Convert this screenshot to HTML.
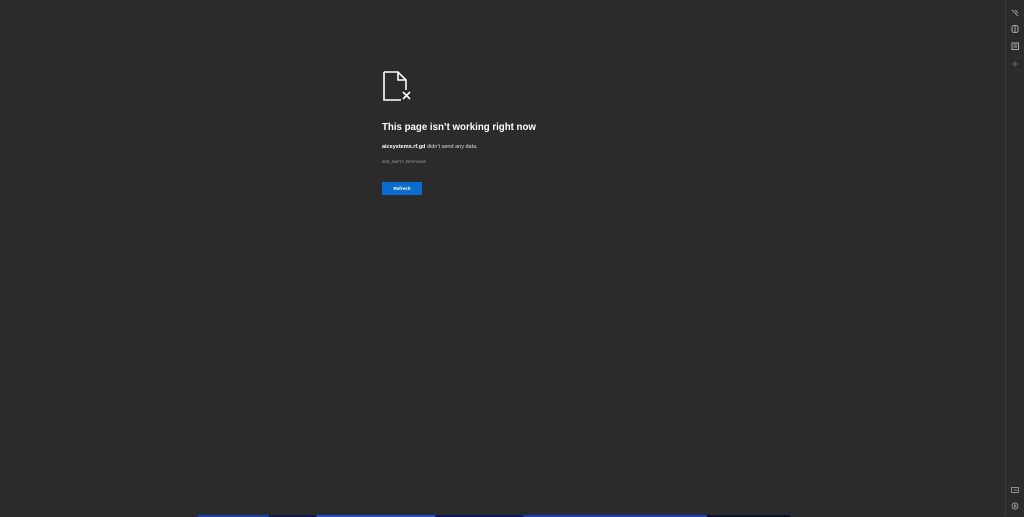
<!DOCTYPE html>
<html><head><meta charset="utf-8"><style>
html,body{margin:0;padding:0;width:1024px;height:517px;overflow:hidden;background:#2b2b2b;font-family:"Segoe UI","Liberation Sans",sans-serif;color:#fff;position:relative}
.side{position:absolute;left:1005px;top:0;width:1px;height:515px;background:#3d3d3d}
.ic{position:absolute;left:1010px;width:10px;height:10px}
h1{position:absolute;left:382px;top:122px;margin:0;font-size:9.7px;line-height:12px;font-weight:bold;white-space:nowrap}
.msg{position:absolute;left:382px;top:144px;font-size:5.5px;line-height:7px;color:#ddd;white-space:nowrap}
.msg b{color:#fff}
.code{position:absolute;left:382px;top:160px;font-size:3.6px;line-height:5px;color:#aaa;white-space:nowrap}
.btn{position:absolute;left:382px;top:182px;width:40px;height:13px;background:#0a6ccf;color:#fff;font-size:4.6px;font-weight:bold;text-align:center;line-height:13px}
.bar{position:absolute;left:198px;top:515px;width:592px;height:2px;background:linear-gradient(90deg,#1840b0 0 12%,#0c1a50 12% 20%,#2050d0 20% 40%,#0a1a60 40% 55%,#1a3fc0 55% 86%,#081230 86% 100%)}
</style></head><body>
<svg style="position:absolute;left:383px;top:71px" width="30" height="31" viewBox="0 0 30 31" fill="none" stroke="#fff" stroke-width="1.6">
<path d="M1 1H15L23 9V19M1 1V29H18"/><path d="M15 1V9H23"/><path d="M20 21L27 28M27 21L20 28"/>
</svg>
<h1>This page isn’t working right now</h1>
<div class="msg"><b>aicsystems.rf.gd</b> didn’t send any data.</div>
<div class="code">ERR_EMPTY_RESPONSE</div>
<div class="btn">Refresh</div>
<div class="side"></div>
<svg class="ic" style="top:8px" viewBox="0 0 10 10" stroke="#999" fill="none" stroke-width="1"><path d="M2 2L8 8M5 2L8 5"/></svg>
<svg class="ic" style="top:24px" viewBox="0 0 10 10" stroke="#aaa" fill="none" stroke-width="1"><rect x="2" y="1.5" width="6" height="7" rx="2"/><path d="M5 1.5V8.5"/></svg>
<svg class="ic" style="top:41px" viewBox="0 0 10 10" stroke="#aaa" fill="none" stroke-width="1"><rect x="2" y="2" width="6.5" height="6.5"/><path d="M3.5 4H7M3.5 6H7"/></svg>
<svg class="ic" style="top:59px" viewBox="0 0 10 10" stroke="#777" fill="none" stroke-width="0.8"><path d="M5 2V8M2 5H8"/></svg>
<svg class="ic" style="top:485px" viewBox="0 0 10 10" stroke="#999" fill="none" stroke-width="0.9"><rect x="1.5" y="2.5" width="7" height="5"/><path d="M4 5H7"/></svg>
<svg class="ic" style="top:501px" viewBox="0 0 10 10" stroke="#999" fill="none" stroke-width="0.9"><circle cx="5" cy="5" r="3"/><circle cx="5" cy="5" r="1"/></svg>
<div class="bar"></div>
</body></html>
